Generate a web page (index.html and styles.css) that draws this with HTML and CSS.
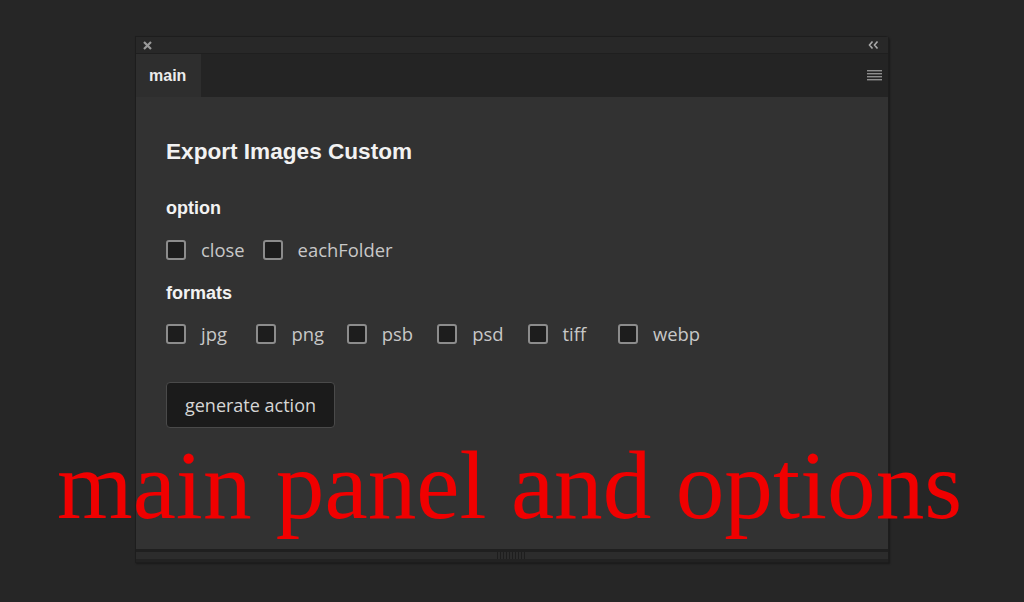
FILE: index.html
```html
<!DOCTYPE html>
<html lang="en">

<head>
    <meta charset="UTF-8">
    <meta name="viewport" content="width=device-width, initial-scale=1.0">
    <title>main panel</title>
    <link rel="stylesheet" href="styles.css">
</head>

<body>
    <div class="panel">
        <div class="top-bar">
            <svg class="close-btn" width="9" height="9" viewBox="0 0 9 9">
                <path d="M1 1 L8 8 M8 1 L1 8" stroke="#9a9a9a" stroke-width="2.2" fill="none"/>
            </svg>
            <svg class="collapse-btn" width="11" height="8" viewBox="0 0 11 8">
                <path d="M4.5 0.5 L1.5 4 L4.5 7.5 M9.5 0.5 L6.5 4 L9.5 7.5" stroke="#a8a8a8" stroke-width="1.6" fill="none"/>
            </svg>
        </div>
        <div class="tab-row">
            <div class="tab">main</div>
            <svg class="menu-btn" width="15" height="11" viewBox="0 0 15 11">
                <rect x="0" y="0" width="15" height="1.4" fill="#8e8e8e"/>
                <rect x="0" y="3" width="15" height="1.4" fill="#8e8e8e"/>
                <rect x="0" y="6" width="15" height="1.4" fill="#8e8e8e"/>
                <rect x="0" y="9" width="15" height="1.4" fill="#8e8e8e"/>
            </svg>
        </div>
        <div class="content">
            <h1 class="title">Export Images Custom</h1>

            <h2 class="group-label first">option</h2>
            <div class="check-row">
                <label class="check"><span class="box"></span><span>close</span></label>
                <label class="check"><span class="box"></span><span>eachFolder</span></label>
            </div>

            <h2 class="group-label">formats</h2>
            <div class="check-row formats">
                <label class="check"><span class="box"></span><span>jpg</span></label>
                <label class="check"><span class="box"></span><span>png</span></label>
                <label class="check"><span class="box"></span><span>psb</span></label>
                <label class="check"><span class="box"></span><span>psd</span></label>
                <label class="check"><span class="box"></span><span>tiff</span></label>
                <label class="check"><span class="box"></span><span>webp</span></label>
            </div>

            <button class="generate">generate action</button>
        </div>
        <div class="bottom-bar">
            <div class="grip"></div>
        </div>
    </div>

    <div class="caption">main panel and options</div>
</body>

</html>
```

FILE: styles.css
```css
* {
    margin: 0;
    padding: 0;
    box-sizing: border-box;
}
body {
    background-color: #262626;
    font-family: "Liberation Sans", Arial, sans-serif;
    width: 1024px;
    height: 602px;
    overflow: hidden;
}
.panel {
    width: 754px;
    height: 527px;
    margin: 36px 0 0 135px;
    background-color: #232323;
    border: 1px solid #1d1d1d;
    border-top-right-radius: 4px;
    display: flex;
    flex-direction: column;
    box-shadow: 1px 1px 2px rgba(0, 0, 0, 0.35);
}
.top-bar {
    height: 17px;
    background-color: #282828;
    border-bottom: 1px solid #1f1f1f;
    display: flex;
    align-items: center;
    justify-content: space-between;
    padding: 0 9px 0 7px;
}
.tab-row {
    height: 43px;
    background-color: #242424;
    display: flex;
    align-items: center;
    justify-content: space-between;
    padding-right: 6px;
}
.tab {
    width: 65px;
    height: 100%;
    background-color: #2e2e2e;
    color: #ececec;
    font-weight: bold;
    font-size: 16px;
    display: flex;
    align-items: center;
    padding-left: 13px;
}
.content {
    flex: 1;
    background-color: #323232;
    padding: 42px 0 0 30px;
    display: flex;
    flex-direction: column;
    align-items: flex-start;
}
.title {
    color: #f2f2f2;
    font-size: 22.6px;
    line-height: 26px;
    font-weight: bold;
}
.group-label {
    color: #f2f2f2;
    font-size: 18px;
    line-height: 20px;
    font-weight: bold;
    margin-top: 23px;
}
.group-label.first {
    margin-top: 33px;
}
.check-row {
    display: flex;
    margin-top: 22px;
    height: 20px;
    align-items: center;
}
.check {
    display: flex;
    align-items: center;
    font-family: "Open Sans", "Noto Sans", sans-serif;
    font-size: 18.4px;
    line-height: 20px;
    color: #c8c8c8;
    margin-right: 18px;
}
.box {
    width: 20px;
    height: 20px;
    border: 2px solid #8c8c8c;
    border-radius: 3px;
    background-color: #1d1d1d;
    margin-right: 15px;
}
.formats {
    margin-top: 21px;
}
.formats .check {
    width: 90.4px;
    margin-right: 0;
}
.generate {
    margin-top: 38px;
    width: 169px;
    height: 46px;
    background-color: #1b1b1b;
    border: 1px solid #4a4a4a;
    border-radius: 4px;
    color: #d6d6d6;
    font-family: "Open Sans", "Noto Sans", sans-serif;
    font-size: 18px;
}
.bottom-bar {
    height: 13px;
    background-color: #2c2c2c;
    border-top: 3px solid #1f1f1f;
    border-bottom: 3px solid #222222;
    display: flex;
    justify-content: center;
    align-items: center;
}
.grip {
    width: 30px;
    height: 7px;
    background: repeating-linear-gradient(90deg, #1e1e1e 0, #1e1e1e 1px, transparent 1px, transparent 3px);
}
.caption {
    position: absolute;
    left: 57px;
    top: 437px;
    font-family: "Liberation Serif", "Times New Roman", serif;
    font-size: 97.3px;
    line-height: 97px;
    color: #f00000;
    white-space: nowrap;
}
```
